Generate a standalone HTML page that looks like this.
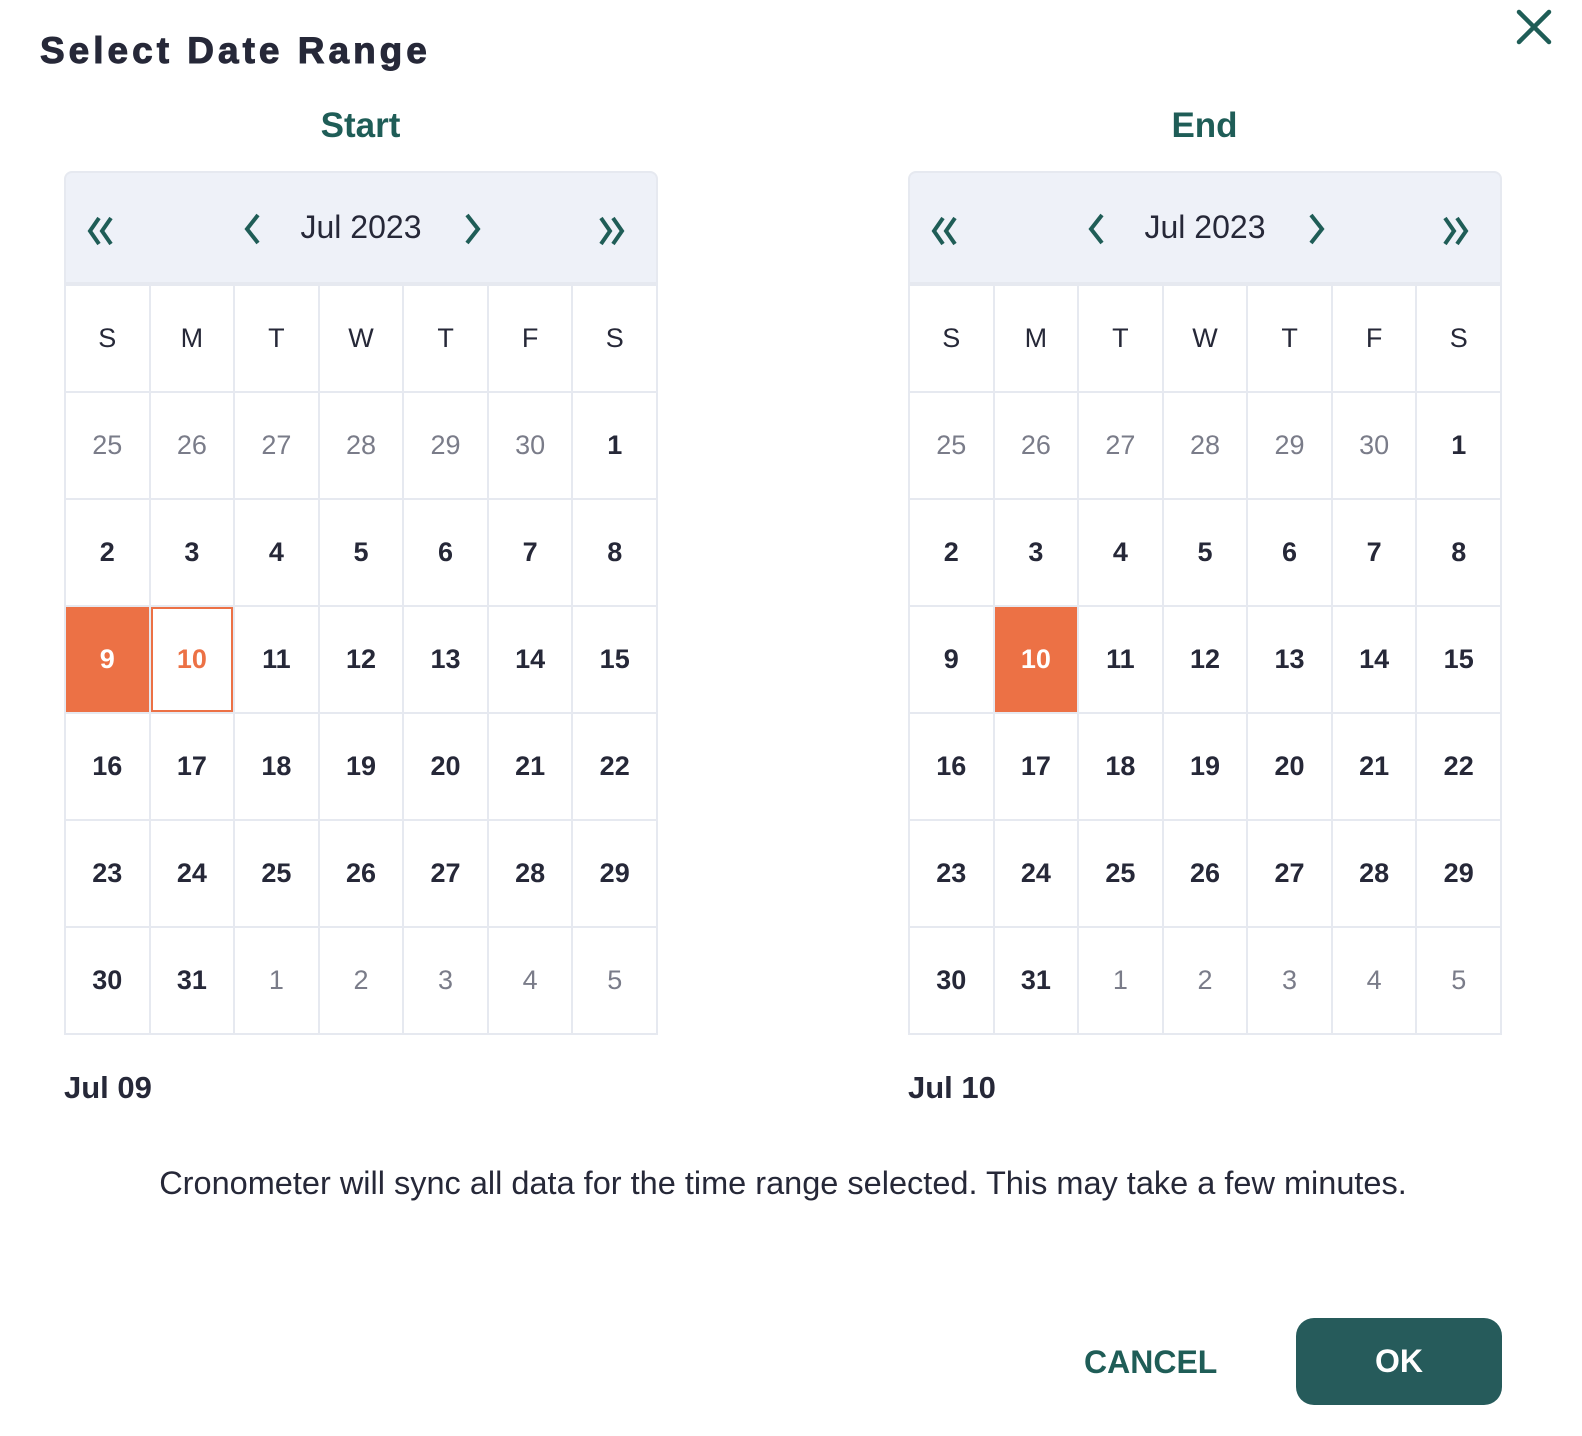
<!DOCTYPE html>
<html><head><meta charset="utf-8"><style>
*{box-sizing:border-box;margin:0;padding:0}
body{width:1582px;height:1436px;background:#fff;font-family:"Liberation Sans",sans-serif;color:#262838;position:relative;overflow:hidden}
.title{position:absolute;left:40px;top:30px;font-size:37px;font-weight:900;letter-spacing:4px;color:#262838;-webkit-text-stroke:1px #262838}
.close{position:absolute;left:1515px;top:8px}
.lbl{position:absolute;top:106px;font-size:35px;font-weight:bold;color:#1f5d57;width:593px;text-align:center}
.cal{position:absolute;top:171px;width:594px}
.hd{height:113px;background:#eef1f8;border:2px solid #e6e9f0;border-radius:8px 8px 0 0;position:relative}
.hd .m{position:absolute;left:0;right:0;top:36px;text-align:center;font-size:32px;color:#262838}
.hd svg{position:absolute}
.grid{display:grid;grid-template-columns:repeat(7,1fr);border-left:2px solid #e6e9f0;border-top:2px solid #e6e9f0}
.grid div{height:107px;border-right:2px solid #e6e9f0;border-bottom:2px solid #e6e9f0;display:flex;align-items:center;justify-content:center;font-size:27px;font-weight:bold;color:#262838}
.grid .w{font-weight:normal;font-size:27px}
.grid .o{color:#7a7c89;font-weight:normal}
.grid .sel{background:#ec7145;color:#fff}
.grid .tod{color:#ec7145;box-shadow:inset 0 0 0 2px #ec7145}
.dt{position:absolute;top:1070px;font-size:31px;font-weight:bold;color:#262838}
.info{position:absolute;top:1165px;left:0;width:1566px;text-align:center;font-size:32.5px;color:#262838}
.cancel{position:absolute;left:1084px;top:1344px;font-size:32px;font-weight:bold;color:#1f5d57}
.ok{position:absolute;left:1296px;top:1318px;width:206px;height:87px;background:#265b5b;border-radius:18px;color:#fff;font-size:32px;font-weight:bold;text-align:center;line-height:87px}
</style></head><body>
<div class="title">Select Date Range</div>
<svg class="close" width="38" height="38" viewBox="0 0 38 38"><path d="M4 4L34 34M34 4L4 34" stroke="#1f5d57" stroke-width="4.5" stroke-linecap="round"/></svg>

<div class="lbl" style="left:64px">Start</div>
<div class="lbl" style="left:908px">End</div>

<div class="cal" style="left:64px">
 <div class="hd">
  <svg style="left:20px;top:42px" width="30" height="32" viewBox="0 0 30 32"><path d="M13 3L4 16L13 29M25 3L16 16L25 29" fill="none" stroke="#1f5d57" stroke-width="4"/></svg>
  <svg style="left:174px;top:38px" width="24" height="36" viewBox="0 0 24 36"><path d="M18 4L7 18L18 32" fill="none" stroke="#1f5d57" stroke-width="4"/></svg>
  <div class="m">Jul 2023</div>
  <svg style="left:395px;top:38px" width="24" height="36" viewBox="0 0 24 36"><path d="M6 4L17 18L6 32" fill="none" stroke="#1f5d57" stroke-width="4"/></svg>
  <svg style="left:530px;top:42px" width="30" height="32" viewBox="0 0 30 32"><path d="M5 3L14 16L5 29M17 3L26 16L17 29" fill="none" stroke="#1f5d57" stroke-width="4"/></svg>
 </div>
 <div class="grid">
  <div class="w">S</div><div class="w">M</div><div class="w">T</div><div class="w">W</div><div class="w">T</div><div class="w">F</div><div class="w">S</div>
  <div class="o">25</div><div class="o">26</div><div class="o">27</div><div class="o">28</div><div class="o">29</div><div class="o">30</div><div>1</div>
  <div>2</div><div>3</div><div>4</div><div>5</div><div>6</div><div>7</div><div>8</div>
  <div class="sel">9</div><div class="tod">10</div><div>11</div><div>12</div><div>13</div><div>14</div><div>15</div>
  <div>16</div><div>17</div><div>18</div><div>19</div><div>20</div><div>21</div><div>22</div>
  <div>23</div><div>24</div><div>25</div><div>26</div><div>27</div><div>28</div><div>29</div>
  <div>30</div><div>31</div><div class="o">1</div><div class="o">2</div><div class="o">3</div><div class="o">4</div><div class="o">5</div>
 </div>
</div>

<div class="cal" style="left:908px">
 <div class="hd">
  <svg style="left:20px;top:42px" width="30" height="32" viewBox="0 0 30 32"><path d="M13 3L4 16L13 29M25 3L16 16L25 29" fill="none" stroke="#1f5d57" stroke-width="4"/></svg>
  <svg style="left:174px;top:38px" width="24" height="36" viewBox="0 0 24 36"><path d="M18 4L7 18L18 32" fill="none" stroke="#1f5d57" stroke-width="4"/></svg>
  <div class="m">Jul 2023</div>
  <svg style="left:395px;top:38px" width="24" height="36" viewBox="0 0 24 36"><path d="M6 4L17 18L6 32" fill="none" stroke="#1f5d57" stroke-width="4"/></svg>
  <svg style="left:530px;top:42px" width="30" height="32" viewBox="0 0 30 32"><path d="M5 3L14 16L5 29M17 3L26 16L17 29" fill="none" stroke="#1f5d57" stroke-width="4"/></svg>
 </div>
 <div class="grid">
  <div class="w">S</div><div class="w">M</div><div class="w">T</div><div class="w">W</div><div class="w">T</div><div class="w">F</div><div class="w">S</div>
  <div class="o">25</div><div class="o">26</div><div class="o">27</div><div class="o">28</div><div class="o">29</div><div class="o">30</div><div>1</div>
  <div>2</div><div>3</div><div>4</div><div>5</div><div>6</div><div>7</div><div>8</div>
  <div>9</div><div class="sel">10</div><div>11</div><div>12</div><div>13</div><div>14</div><div>15</div>
  <div>16</div><div>17</div><div>18</div><div>19</div><div>20</div><div>21</div><div>22</div>
  <div>23</div><div>24</div><div>25</div><div>26</div><div>27</div><div>28</div><div>29</div>
  <div>30</div><div>31</div><div class="o">1</div><div class="o">2</div><div class="o">3</div><div class="o">4</div><div class="o">5</div>
 </div>
</div>

<div class="dt" style="left:64px">Jul 09</div>
<div class="dt" style="left:908px">Jul 10</div>
<div class="info">Cronometer will sync all data for the time range selected. This may take a few minutes.</div>
<div class="cancel">CANCEL</div>
<div class="ok">OK</div>
</body></html>
